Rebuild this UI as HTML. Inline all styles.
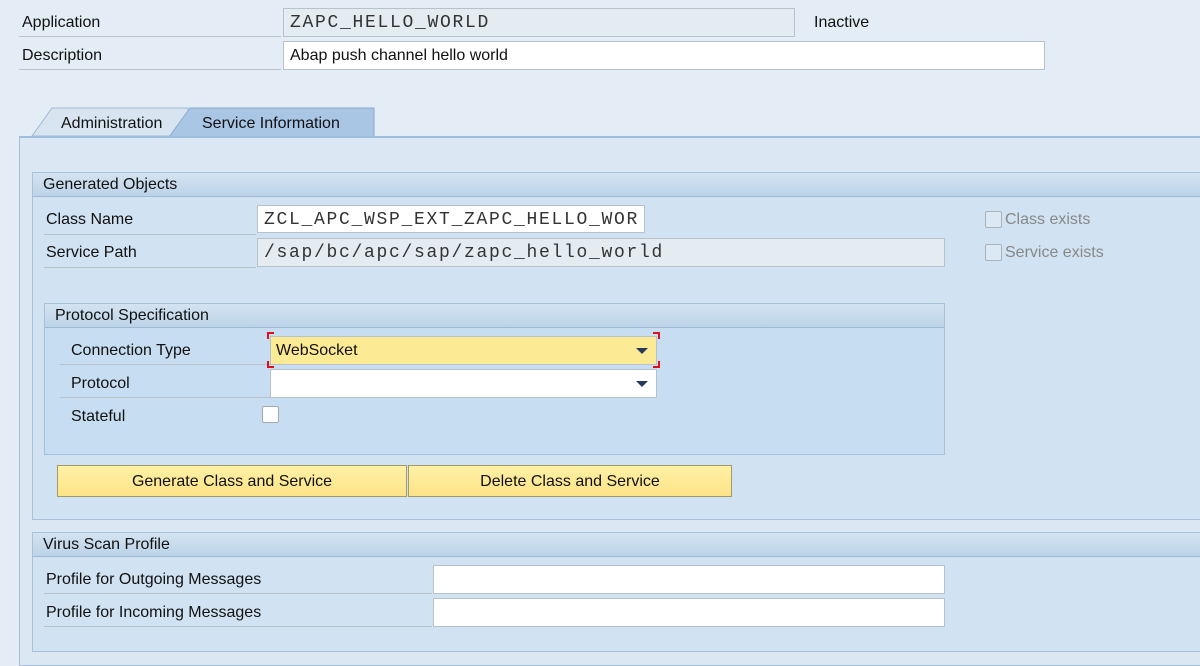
<!DOCTYPE html>
<html><head><meta charset="utf-8"><style>
*{box-sizing:border-box;margin:0;padding:0}
body{width:1200px;height:655px;overflow:hidden;background:#e4edf5;font-family:"Liberation Sans",Tahoma,sans-serif;font-size:16px;color:#111;position:relative}
.a{position:absolute}
.lbl{position:absolute;white-space:nowrap;line-height:22px}
.ul{position:absolute;height:1px;background:#b8c3cc}
.in{position:absolute;background:#fff;border:1px solid #b9c2ca;padding-left:6px;line-height:28px;white-space:nowrap;overflow:hidden}
.mono{font-family:"Liberation Mono",monospace;font-size:18px;letter-spacing:1.7px;color:#333}
.ro{background:#e4ebf1}
.grp{position:absolute;background:#d1e2f2;border:1px solid #a8c0d8}
.gh{position:absolute;left:0;right:0;top:0;height:24px;background:linear-gradient(#d4e3f1,#bcd3e8);border-bottom:1px solid #9fb9d3;padding-left:10px;line-height:24px}
.cb{position:absolute;width:17px;height:17px;border:1px solid #a3a9ae;background:#fff;border-radius:2px}
.btn{position:absolute;background:linear-gradient(#fef1a6,#fde387);border:1px solid #a39a6b;text-align:center;line-height:31px}
.arr{position:absolute;right:8px;top:11px;width:0;height:0;border-left:6px solid transparent;border-right:6px solid transparent;border-top:6px solid #283a5a}
</style></head><body>
<div class="lbl" style="left:22px;top:12px">Application</div>
<div class="ul" style="left:19px;top:36px;width:262px"></div>
<div class="in mono ro" style="left:283px;top:8px;width:512px;height:29px">ZAPC_HELLO_WORLD</div>
<div class="lbl" style="left:814px;top:12px">Inactive</div>
<div class="lbl" style="left:22px;top:45px">Description</div>
<div class="ul" style="left:19px;top:69px;width:262px"></div>
<div class="in" style="left:283px;top:41px;width:762px;height:29px">Abap push channel hello world</div>

<svg class="a" style="left:19px;top:105px" width="380" height="35">
<path d="M13 31 L33 3 L169 3 L169 31 Z" fill="#d8e5f1" stroke="#9fb9d3"/>
<path d="M150 32 L171 3 L355 3 L355 32 Z" fill="#a9c6e5" stroke="#8aaccf"/>
</svg>
<div class="lbl" style="left:61px;top:113px">Administration</div>
<div class="lbl" style="left:202px;top:113px">Service Information</div>

<div class="a" style="left:19px;top:136px;width:1190px;height:530px;background:#dbe7f3;border:1px solid #a6c0da;border-top:2px solid #9ebedf"></div>

<div class="grp" style="left:32px;top:172px;width:1180px;height:348px"><div class="gh">Generated Objects</div></div>
<div class="lbl" style="left:46px;top:209px">Class Name</div>
<div class="ul" style="left:44px;top:234px;width:212px"></div>
<div class="in mono" style="left:257px;top:205px;width:388px;height:28px">ZCL_APC_WSP_EXT_ZAPC_HELLO_WOR</div>
<div class="lbl" style="left:46px;top:242px">Service Path</div>
<div class="ul" style="left:44px;top:267px;width:212px"></div>
<div class="in mono ro" style="left:257px;top:238px;width:688px;height:29px">/sap/bc/apc/sap/zapc_hello_world</div>
<div class="cb" style="left:985px;top:211px;background:#dce8f3;border-color:#a9b3bb"></div>
<div class="lbl" style="left:1005px;top:209px;color:#888">Class exists</div>
<div class="cb" style="left:985px;top:244px;background:#dce8f3;border-color:#a9b3bb"></div>
<div class="lbl" style="left:1005px;top:242px;color:#888">Service exists</div>

<div class="grp" style="left:44px;top:303px;width:901px;height:152px;background:#c7ddf2"><div class="gh">Protocol Specification</div></div>
<div class="lbl" style="left:71px;top:340px">Connection Type</div>
<div class="ul" style="left:60px;top:364px;width:210px"></div>
<div class="in" style="left:270px;top:336px;width:387px;height:29px;background:#fdea95;padding-left:5px">WebSocket<div class="arr"></div></div>
<svg class="a" style="left:267px;top:332px" width="393" height="36"><g stroke="#e0101a" stroke-width="2" fill="none"><path d="M1 7V1H7M386 1H392V7M1 29V35H7M386 35H392V29"/></g></svg>
<div class="lbl" style="left:71px;top:373px">Protocol</div>
<div class="ul" style="left:60px;top:397px;width:210px"></div>
<div class="in" style="left:270px;top:369px;width:387px;height:29px"><div class="arr"></div></div>
<div class="lbl" style="left:71px;top:406px">Stateful</div>
<div class="cb" style="left:262px;top:406px"></div>

<div class="btn" style="left:57px;top:465px;width:350px;height:32px">Generate Class and Service</div>
<div class="btn" style="left:408px;top:465px;width:324px;height:32px">Delete Class and Service</div>

<div class="grp" style="left:32px;top:532px;width:1180px;height:120px"><div class="gh">Virus Scan Profile</div></div>
<div class="lbl" style="left:46px;top:569px">Profile for Outgoing Messages</div>
<div class="ul" style="left:44px;top:593px;width:388px"></div>
<div class="in" style="left:433px;top:565px;width:512px;height:29px"></div>
<div class="lbl" style="left:46px;top:602px">Profile for Incoming Messages</div>
<div class="ul" style="left:44px;top:626px;width:388px"></div>
<div class="in" style="left:433px;top:598px;width:512px;height:29px"></div>
</body></html>
